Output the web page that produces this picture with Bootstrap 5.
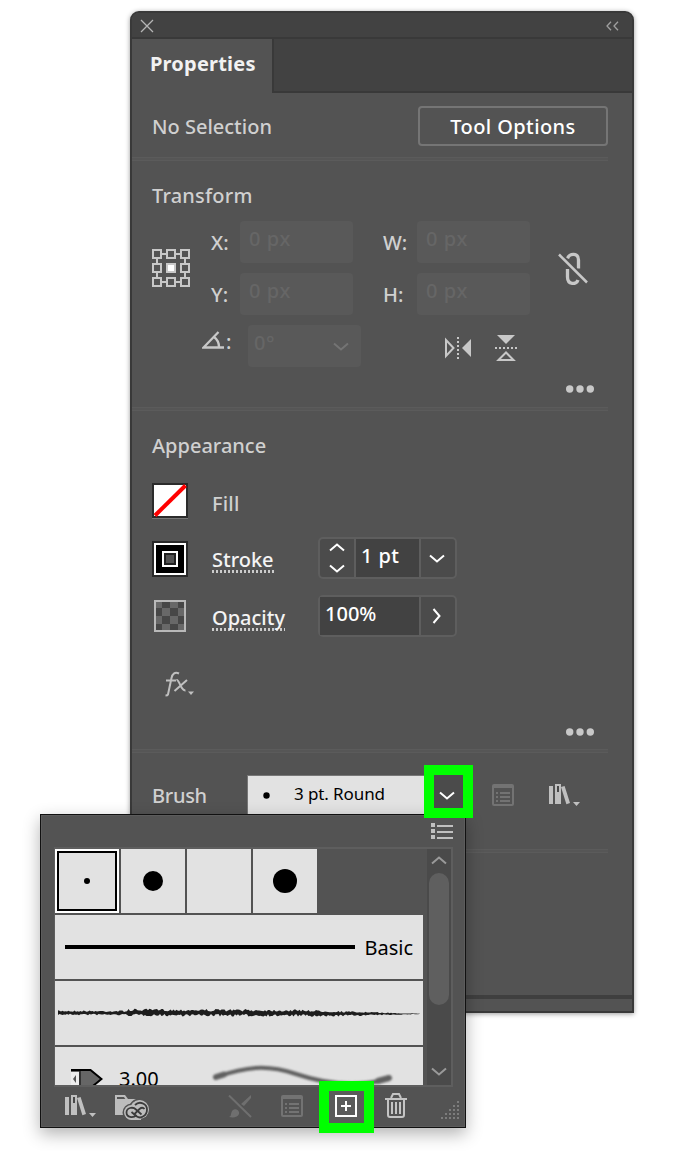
<!DOCTYPE html>
<html lang="en">
<head>
<meta charset="utf-8">
<meta name="viewport" content="width=device-width, initial-scale=1">
<title>Properties</title>
<link href="https://cdn.jsdelivr.net/npm/bootstrap@5.3.0/dist/css/bootstrap.min.css" rel="stylesheet">
<style>
body{background:#fff;font-family:"Noto Sans","Open Sans",sans-serif;font-size:20px;line-height:26px;font-weight:500;color:#d0d0d0;overflow:hidden}
svg{display:block;flex:none}
.stage{width:674px;height:1151px;overflow:hidden}
.panel{margin:11px 0 0 130px;width:504px;height:1002px;background:#535353;border:2px solid #393939;border-radius:9px 9px 0 0;box-shadow:0 1px 5px rgba(0,0,0,.4)}
.titlebar{height:26px;background:#424242;border-bottom:2px solid #393939;border-radius:7px 7px 0 0;padding:0 13px 0 8px}
.tabs{height:54px;background:#424242}
.tab-on{width:142px;background:#535353;border-right:2px solid #393939;color:#f2f2f2;font-weight:700;padding:12px 0 0 18px;letter-spacing:.2px}
.tab-rest{border-bottom:2px solid #393939}
.section{padding-left:20px;width:476px}
.rule{width:476px;height:4px;border:solid #5b5b5b;border-width:1px 0;background:#565656}
.s-head{height:64px;padding-top:13px}
.s-transform{height:246px;padding-top:22px}
.s-appear{height:338px;padding-top:22px}
.s-brush{height:96px;padding-top:22px}
.tool-btn{width:190px;height:40px;border:2px solid #757575;border-radius:4px;color:#fff;font-size:20px;font-weight:500;line-height:26px;padding:6px 0 4px;letter-spacing:.4px}
.dim{background:#595959;color:#666;border-radius:4px;width:113px;height:42px;padding:5px 8px 5px 9px;letter-spacing:.6px}
.lbl{padding-top:9px}
.fields{row-gap:10px}
.dotted{color:#f4f4f4;background:repeating-linear-gradient(90deg,#ccc 0 2px,transparent 2px 4px) 0 100%/100% 3px no-repeat;height:26px}
.stepper{width:139px;height:42px;border:2px solid #5e5e5e;border-radius:5px;background:#4b4b4b;color:#fff}
.stepper>*+*{border-left:2px solid #5e5e5e}
.val{background:#424242;padding:4px 0 0 5px}
.brush-box{height:40px;width:178px;background:#e2e2e2;border:1px solid #777;color:#000;font-size:17px;font-weight:400;padding:0 0 2px 15px}
.spot{border:10px solid #0f0;z-index:5}
.spot-drop{left:424px;top:765px;width:49px;height:53px;background:#4b4b4b}
.spot-new{left:319px;top:1081px;width:55px;height:52px;background:#5b5b5b}
.popup{left:40px;top:814px;width:426px;height:314px;background:#535353;border:1px solid #111;box-shadow:0 6px 16px rgba(0,0,0,.3),inset 0 0 0 1px #5c5c5c;z-index:3;padding:8px 12px 0 13px}
.brushes{margin-top:7px;height:240px;border:solid #5e5e5e;border-width:2px 2px 2px 1px;overflow:hidden;width:399px}
.tiles{width:368px;color:#000;row-gap:2px}
.tile{background:#e2e2e2;width:64px;height:64px}
.tile.on{border:2px solid #fff;outline:2px solid #000;outline-offset:-4px}
.strip{background:#e2e2e2;width:368px;height:64px;flex:none}
.track{width:24px;background:#4a4a4a;margin-left:4px;padding:7px 1px 9px 0}
.thumb{width:20px;height:132px;border-radius:10px;background:#5f5f5f}
.foot{height:38px;padding:7px 0 0 10px}
</style>
<script src="https://cdn.jsdelivr.net/npm/bootstrap@5.3.0/dist/js/bootstrap.bundle.min.js"></script>
</head>
<body>
<svg width="0" height="0" class="position-absolute">
  <defs>
    <symbol id="i-down" viewBox="0 0 16 9"><path d="M1 1.500l7 6 7-6" fill="none" stroke="currentColor" stroke-width="2"/></symbol>
    <symbol id="i-up" viewBox="0 0 16 9"><path d="M1 7.500l7-6 7 6" fill="none" stroke="currentColor" stroke-width="2"/></symbol>
    <symbol id="i-dots" viewBox="0 0 28 8"><g fill="#c8c8c8"><circle cx="3.700" cy="4" r="3.700"/><circle cx="14" cy="4" r="3.700"/><circle cx="24.300" cy="4" r="3.700"/></g></symbol>
    <symbol id="i-options" viewBox="0 0 22 22"><rect x="1" y="1" width="20" height="20" rx="1" fill="none" stroke="#737373" stroke-width="2"/><path d="M1 3h20M4 9h2M4 13h2M4 17h2M8 9h10M8 13h10M8 17h10" stroke="#737373" stroke-width="2"/></symbol>
    <symbol id="i-books" viewBox="0 0 31 23"><g fill="#c0c0c0"><path d="M0 2h4v18H0zM6 0h6v20H6zM12 3l3.600-1L21 19l-3.600 1.300zM24 18h7l-3.500 4z"/></g><path d="M8 2h2v6H8z" fill="#484848"/></symbol>
  </defs>
</svg>
<main class="stage position-relative d-flow-root">
  <div class="d-flex">
  <section class="panel">
    <header class="titlebar d-flex align-items-center justify-content-between">
      <svg width="14" height="14" viewBox="0 0 14 14" style="margin-top:2px"><path d="M1 1l12 12M13 1L1 13" stroke="#b5b5b5" stroke-width="1.300"/></svg>
      <svg width="13" height="10" viewBox="0 0 13 10" style="margin-top:1px"><path d="M5 .7L1 5l4 4.300M12 .7L8 5l4 4.300" fill="none" stroke="#a0a0a0" stroke-width="1.300"/></svg>
    </header>
    <div class="tabs d-flex">
      <div class="tab-on">Properties</div>
      <div class="tab-rest flex-grow-1"></div>
    </div>

    <div class="section s-head d-flex justify-content-between">
      <span class="pt-2">No Selection</span>
      <button class="btn tool-btn" type="button">Tool Options</button>
    </div>
    <div class="rule"></div>

    <div class="section s-transform">
      <div style="letter-spacing:.2px">Transform</div>
      <div class="d-flex align-items-start" style="margin-top:12px">
        <svg width="38" height="38" viewBox="0 0 38 38" style="margin-top:28px">
          <path d="M5 5h28v28H5z" fill="none" stroke="#c8c8c8" stroke-width="2"/>
          <g fill="#535353" stroke="#c8c8c8" stroke-width="2"><path d="M1 1h8v8H1zM15 1h8v8h-8zM29 1h8v8h-8zM1 15h8v8H1zM29 15h8v8h-8zM1 29h8v8H1zM15 29h8v8h-8zM29 29h8v8h-8z"/></g>
          <path d="M15 15h8v8h-8z" fill="#fff" stroke="#c8c8c8" stroke-width="2"/>
          <path d="M11 19h2.500M24.500 19H27" stroke="#535353" stroke-width="2"/>
        </svg>
        <div class="d-flex flex-column fields" style="margin-left:21px">
          <div class="d-flex"><span class="lbl" style="width:29px">X:</span><span class="dim">0 px</span></div>
          <div class="d-flex"><span class="lbl" style="width:29px">Y:</span><span class="dim">0 px</span></div>
        </div>
        <div class="d-flex flex-column fields" style="margin-left:30px">
          <div class="d-flex"><span class="lbl" style="width:34px">W:</span><span class="dim">0 px</span></div>
          <div class="d-flex"><span class="lbl" style="width:34px">H:</span><span class="dim">0 px</span></div>
        </div>
        <svg width="30" height="34" viewBox="0 0 30 34" style="margin:31px 0 0 28px">
          <g fill="none" stroke="#c8c8c8" stroke-width="3.300"><path d="M9.500 6.500C11 1 20.500 .5 20.500 8v8.500M9.500 17v8c0 8 9 8 10.500 3"/></g>
          <path d="M1.500 3l28 28" stroke="#535353" stroke-width="6"/><path d="M1 2.500l28 28" stroke="#c8c8c8" stroke-width="2.500"/>
        </svg>
      </div>
      <div class="d-flex align-items-start" style="margin:10px 0 0 50px">
        <svg width="22" height="19" viewBox="0 0 22 19" style="margin-top:6px"><path d="M16.500 1L1.500 16.500H22M12 6c4 3 5 6 5 10" fill="none" stroke="#c8c8c8" stroke-width="2.300"/></svg>
        <span style="width:24px;padding:4px 0 0 2px">:</span>
        <span class="dim d-flex justify-content-between" style="padding-left:6px"><span>0°</span><svg width="16" height="9" style="margin:12px 4px 0 0;color:#747474"><use href="#i-down"/></svg></span>
        <svg width="26" height="22" viewBox="0 0 26 22" style="margin:12px 0 0 84px"><path d="M1 3l7.500 8L1 19z" fill="none" stroke="#c8c8c8" stroke-width="2"/><path d="M26 2v18l-9-9z" fill="#c8c8c8"/><path d="M13 0v22" stroke="#c8c8c8" stroke-width="2" stroke-dasharray="2 2"/></svg>
        <svg width="22" height="26" viewBox="0 0 22 26" style="margin:10px 0 0 24px"><path d="M2 0h18l-9 9z" fill="#c8c8c8"/><path d="M3.500 25l7.500-7.500 7.500 7.500z" fill="none" stroke="#c8c8c8" stroke-width="2"/><path d="M0 13h22" stroke="#c8c8c8" stroke-width="2" stroke-dasharray="2 2"/></svg>
      </div>
      <div class="d-flex justify-content-end" style="padding:18px 14px 0 0"><svg width="28" height="8"><use href="#i-dots"/></svg></div>
    </div>
    <div class="rule"></div>

    <div class="section s-appear">
      <div>Appearance</div>
      <div class="d-flex" style="margin-top:24px">
        <svg width="36" height="37" viewBox="0 0 36 37"><rect width="36" height="35" fill="#2b2b2b"/><rect x="2" y="2" width="32" height="31" fill="#fff"/><path d="M3 32.500L33.500 2.500" stroke="#f00" stroke-width="4"/><path d="M0 35.500h36" stroke="#777"/></svg>
        <span style="margin:8px 0 0 24px;letter-spacing:.2px">Fill</span>
      </div>
      <div class="d-flex align-items-start" style="margin-top:17px">
        <svg width="36" height="36" viewBox="0 0 36 36" style="margin-top:4px"><rect width="36" height="36" fill="#292929"/><rect x="3" y="3" width="30" height="30" fill="#000" stroke="#fff" stroke-width="2"/><rect x="11" y="11" width="14" height="14" fill="#535353" stroke="#fff" stroke-width="2"/><rect x="13" y="13" width="10" height="10" fill="none" stroke="#222" stroke-width="2"/></svg>
        <span class="dotted" style="margin:10px 0 0 24px">Stroke</span>
        <div class="stepper d-flex ms-auto" style="margin-right:151px">
          <span class="d-flex flex-column align-items-center" style="width:34px;padding:4px 1px 0 0;gap:12px"><svg width="16" height="9"><use href="#i-up"/></svg><svg width="16" height="9"><use href="#i-down"/></svg></span>
          <span class="val flex-grow-1" style="letter-spacing:.4px">1 pt</span>
          <span class="d-flex align-items-center justify-content-center" style="width:36px;padding-right:3px"><svg width="16" height="9"><use href="#i-down"/></svg></span>
        </div>
      </div>
      <div class="d-flex align-items-start" style="margin-top:16px">
        <svg width="32" height="32" viewBox="0 0 32 32" style="margin:5px 2px 0"><rect width="32" height="32" fill="#474747"/><path d="M2 2h6v6H2zM16 2h8v6h-8zM8 8h8v8H8zM24 8h6v8h-6zM2 16h6v8H2zM16 16h8v8h-8zM8 24h8v6H8zM24 24h6v6h-6z" fill="#686868"/><rect x="1" y="1" width="30" height="30" fill="none" stroke="#b9b9b9" stroke-width="2"/></svg>
        <span class="dotted" style="margin:10px 0 0 24px">Opacity</span>
        <div class="stepper d-flex ms-auto" style="margin-right:151px">
          <span class="val flex-grow-1">100%</span>
          <span class="d-flex align-items-center justify-content-center" style="width:36px;padding-right:3px"><svg width="9" height="16" viewBox="0 0 9 16"><path d="M1.500 1l6 7-6 7" fill="none" stroke="#fff" stroke-width="2"/></svg></span>
        </div>
      </div>
      <svg width="30" height="26" viewBox="0 0 30 26" style="margin:34px 0 0 12px"><g fill="none" stroke="#c0c0c0" stroke-width="2"><path d="M15 2.500c-4-2-6.500 0-7.500 4.500L4 23.500q-.5 1-2.500 1M2 9.500h10"/><path d="M12.500 9c3-1 4 11 9 10.500M23 9L10.500 20"/></g><path d="M24 20.500h6l-3 3.500z" fill="#c0c0c0"/></svg>
      <div class="d-flex justify-content-end" style="padding:31px 14px 0 0"><svg width="28" height="8"><use href="#i-dots"/></svg></div>
    </div>
    <div class="rule"></div>

    <div class="section s-brush d-flex align-items-start">
      <span style="width:95px;padding-top:8px;letter-spacing:-.3px">Brush</span>
      <div class="brush-box d-flex align-items-center"><svg width="7" height="7" style="margin-top:2px"><circle cx="3.500" cy="3.500" r="3.200"/></svg><span style="margin-left:24px;letter-spacing:-.1px">3 pt. Round</span></div>
      <svg width="22" height="22" style="margin:9px 0 0 67px"><use href="#i-options"/></svg>
      <svg width="31" height="23" style="margin:9px 0 0 35px"><use href="#i-books"/></svg>
    </div>
    <div class="rule"></div>
    <div style="height:146px;border-bottom:4px solid #3f3f3f"></div>
  </section>
  </div>

  <div class="spot spot-drop position-absolute d-flex align-items-center justify-content-center text-white"><svg width="16" height="9" style="margin:7px 0 0 -4px"><use href="#i-down"/></svg></div>

  <section class="popup position-absolute">
    <div class="d-flex justify-content-end"><svg width="22" height="17" viewBox="0 0 22 17"><path d="M0 0h4v4H0zM0 6h4v4H0zM0 12h4v4H0zM6 2h16v2H6zM6 8h16v2H6zM6 14h16v2H6z" fill="#c0c0c0"/></svg></div>
    <div class="brushes d-flex">
      <div class="tiles d-flex flex-column">
        <div class="d-flex" style="gap:2px">
          <div class="tile on d-flex align-items-center justify-content-center"><svg width="6" height="6"><circle cx="3" cy="3" r="3"/></svg></div>
          <div class="tile d-flex align-items-center justify-content-center"><svg width="20" height="20"><circle cx="10" cy="10" r="10"/></svg></div>
          <div class="tile"></div>
          <div class="tile d-flex align-items-center justify-content-center"><svg width="24" height="24"><circle cx="12" cy="12" r="12"/></svg></div>
        </div>
        <div class="strip d-flex align-items-center"><svg width="290" height="4" style="margin-left:10px"><rect width="290" height="4"/></svg><span class="ms-auto fw-normal" style="margin:2px 10px 0 0">Basic</span></div>
        <div class="strip d-flex align-items-center"><svg width="368" height="16" viewBox="0 0 368 16"><path id="charcoal" fill="#1d1d1d"/></svg></div>
        <div class="strip d-flex align-items-start">
          <svg width="32" height="24" viewBox="0 0 32 24" style="margin:21px 0 0 16px"><path d="M0 2h20l11 9-11 9H0z" fill="#666"/><path d="M0 2h19.500l11 9-11 9H0" fill="none" stroke="#000" stroke-width="2"/><path d="M0 4h8v14H0z" fill="#eee"/><path d="M9 3v16" stroke="#333" stroke-width="2"/><path d="M5 7l-3 4 3 4z" fill="#555"/></svg>
          <span class="fw-normal" style="margin:19px 0 0 16px;width:45px">3.00</span>
          <svg width="190" height="40" viewBox="0 0 190 40" style="margin:10px 0 0 44px"><defs><filter id="soft" x="-5%" y="-40%" width="110%" height="180%"><feGaussianBlur stdDeviation="1.200"/></filter></defs><g filter="url(#soft)" fill="none" stroke="#606060" stroke-linecap="round"><path d="M8 20C38 10 58 7 88 17S150 32 181 21" stroke-width="4"/><path d="M8 20l8-2.500M170 24l11-3" stroke-width="6"/></g></svg>
        </div>
      </div>
      <div class="track d-flex flex-column align-items-center">
        <svg width="16" height="9" style="color:#9a9a9a"><use href="#i-up"/></svg>
        <div class="thumb" style="margin-top:8px"></div>
        <svg width="16" height="9" class="mt-auto" style="color:#9a9a9a"><use href="#i-down"/></svg>
      </div>
    </div>
    <div class="foot d-flex align-items-start">
      <svg width="31" height="23" style="margin:1px 0 0 1px"><use href="#i-books"/></svg>
      <svg width="36" height="27" viewBox="0 0 36 27" style="margin-left:18px">
        <path d="M1 1h10l3 4h8v16H1z" fill="#bdbdbd"/><path d="M3 3h7l1.300 2H3z" fill="#535353"/>
        <g fill="#bdbdbd" stroke="#535353" stroke-width="2"><circle cx="17.500" cy="18.500" r="8"/><circle cx="25.500" cy="15.500" r="10"/></g>
        <g fill="#bdbdbd"><circle cx="17.500" cy="18.500" r="7.400"/><circle cx="25.500" cy="15.500" r="9.400"/><path d="M17 20h10v6H17z"/></g>
        <g fill="none" stroke="#3c3c3c" stroke-width="1.800"><path d="M27.500 20.500L22 15.500C19 12.500 12.500 13.500 12.500 18.500S19 24.500 22.500 21"/><path d="M17.500 18l5 4.200C27 25.500 33 21.500 33 15.500S25.500 6.500 21 11"/><path d="M20 20.500l5.500-5.500q3-2.500 5 0"/></g>
      </svg>
      <svg width="24" height="23" viewBox="0 0 24 23" style="margin:1px 0 0 78px" fill="#6f6f6f"><path d="M1 .5L23 22" stroke="#6f6f6f" stroke-width="2"/><path d="M23 0v3l-7 8-3-2zM1 22c3-1 1-4 4-7 3-2 7 1 6 4s-5 4-10 3z"/></svg>
      <svg width="22" height="22" style="margin:1px 0 0 29px"><use href="#i-options"/></svg>
      <svg width="22" height="25" viewBox="0 0 22 25" style="margin:-1px 0 0 82px"><g fill="none" stroke="#c4c4c4" stroke-width="2"><path d="M0 6h22M6 5l2-4h6l2 4M3 7v15q0 2 2 2h12q2 0 2-2V7M7 9v12M11 9v12M15 9v12"/></g></svg>
      <svg width="19" height="19" viewBox="0 0 19 19" style="margin:7px 0 0 34px" fill="#7d7d7d"><path d="M16 0h2v2h-2zM12 4h2v2h-2zM16 4h2v2h-2zM8 8h2v2H8zM12 8h2v2h-2zM16 8h2v2h-2zM4 12h2v2H4zM8 12h2v2H8zM12 12h2v2h-2zM16 12h2v2h-2zM0 16h2v2H0zM4 16h2v2H4zM8 16h2v2H8zM12 16h2v2h-2zM16 16h2v2h-2z"/></svg>
    </div>
  </section>

  <div class="spot spot-new position-absolute d-flex align-items-center justify-content-center"><svg width="22" height="22" viewBox="0 0 22 22" style="margin:-2px 0 0 -1px"><path d="M1 1h20v20H1zM11 6v10M6 11h10" fill="none" stroke="#fff" stroke-width="2"/></svg></div>
</main>
<script>
// Rough charcoal edge: upper and lower outlines with seeded jitter, tapering to the right
let seed = 7;
const rnd = () => (seed = (seed * 16807) % 2147483647) / 2147483647;
const up = [], down = [];
for (let x = 3; x <= 365; x += 1.5) {
  const t = x / 365, h = t < .2 ? 1.7 : t < .75 ? 2.5 : 2.5 * (1 - t) * 4 * .8 + .2;
  const y = 7.7 + t * 1.2 - (t > .2 && t < .7 ? .5 : 0);
  up.push(`${x} ${(y - h + (rnd() - .5) * h).toFixed(1)}`);
  down.unshift(`${x} ${(y + h + (rnd() - .5) * h).toFixed(1)}`);
}
document.getElementById('charcoal').setAttribute('d', 'M' + up.concat(down).join('L') + 'z');
</script>
</body>
</html>
